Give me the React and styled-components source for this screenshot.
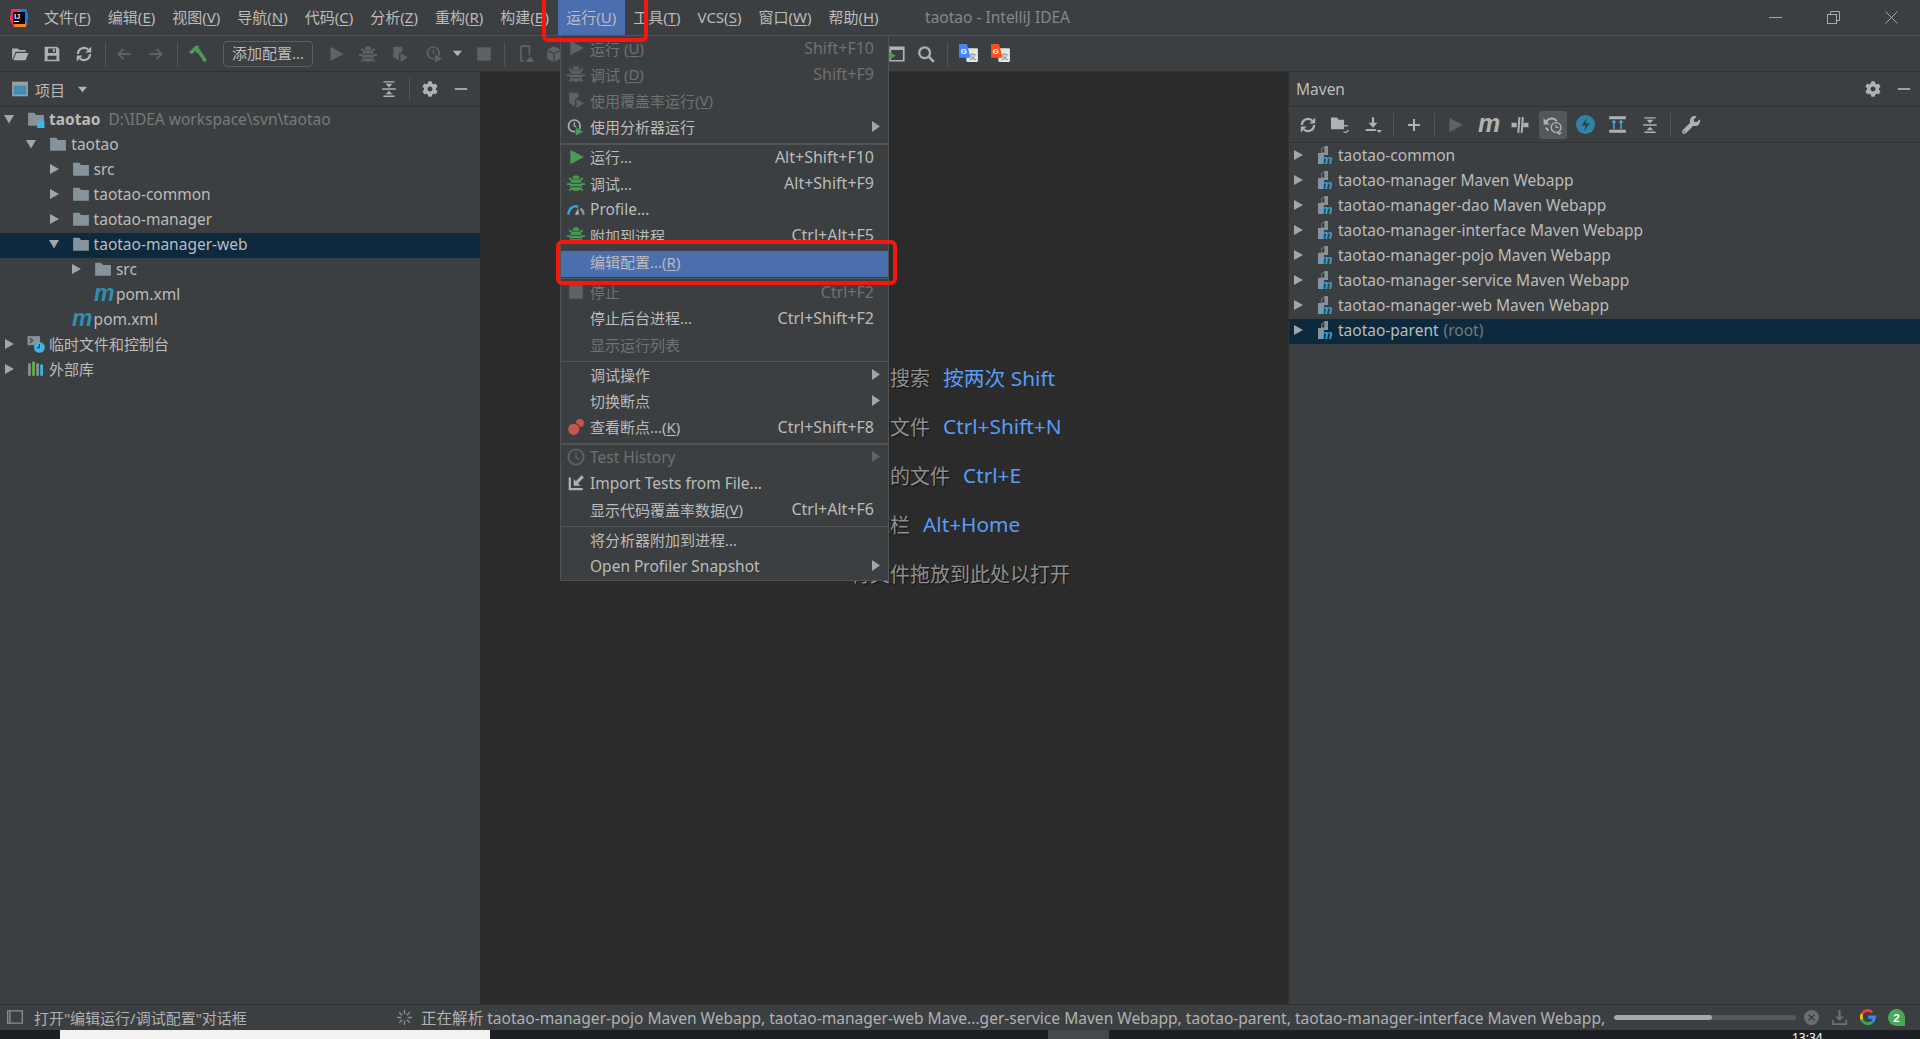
import React from 'react'
import styled, { createGlobalStyle } from 'styled-components'
import { FaCog, FaWrench } from 'react-icons/fa'

const GlobalStyle = createGlobalStyle`
  html, body { margin: 0; padding: 0; background: #3c3f41; }
  * { box-sizing: border-box; }
`

const FONT = '"Noto Sans", "Noto Sans CJK SC", sans-serif'
const GREEN = '#499c54'
const BLUE = '#389fd6'
const TONES = { on: '#afb1b3', off: '#5f6264', green: GREEN, dim: '#6e7072' }

const Page = styled.div`
  position: relative;
  width: 1920px;
  height: 1039px;
  overflow: hidden;
  display: flex;
  flex-direction: column;
  background: #3c3f41;
  color: #bbbbbb;
  font-family: ${FONT};
  font-size: 15px;
  u { text-underline-offset: 2px; }
`

const TitleBar = styled.div`
  height: 36px;
  flex: none;
  display: flex;
  align-items: center;
  padding-left: 9px;
  border-bottom: 1px solid #505254;
`
const MenuList = styled.div`
  display: flex;
  height: 35px;
  margin-left: 6.5px;
`
const MenuItem = styled.div`
  display: flex;
  align-items: center;
  padding: 0 8.5px 2px;
  white-space: nowrap;
  font-size: 15px;
  background: ${p => (p.$active ? '#4b6eaf' : 'transparent')};
`
const WindowTitle = styled.div`
  margin: 0 0 2px 38px;
  color: #858789;
  font-size: 15.5px;
`
const WindowButtons = styled.div`
  margin-left: auto;
  display: flex;
`
const WindowButton = styled.div`
  width: 58px;
  height: 35px;
  display: grid;
  place-items: center;
  color: #a8a8a8;
`

const ToolBar = styled.div`
  height: 36px;
  flex: none;
  display: flex;
  align-items: center;
  gap: ${p => p.$gap || 4}px;
  padding-left: ${p => p.$pad || 6}px;
  border-bottom: 1px solid #323232;
`
const Tool = styled.div`
  width: ${p => p.$w || 28}px;
  height: 28px;
  flex: none;
  display: grid;
  place-items: center;
  border-radius: 3px;
  margin-left: ${p => p.$ml || 0}px;
  background: ${p => (p.$active ? '#55585a' : 'transparent')};
`
const ToolSep = styled.div`
  width: 1px;
  height: 24px;
  flex: none;
  background: #515355;
  margin: 0 ${p => p.$mr ?? 0}px 0 ${p => p.$ml ?? 3}px;
`
const ConfigButton = styled.div`
  width: 90px;
  height: 26px;
  flex: none;
  margin-left: 7px;
  padding-bottom: 2px;
  display: grid;
  place-items: center;
  border: 1px solid #5e6060;
  border-radius: 4px;
  font-size: 15px;
`

const Main = styled.div`
  flex: 1;
  min-height: 0;
  display: flex;
`
const SidePanel = styled.div`
  width: ${p => p.$w}px;
  flex: none;
  display: flex;
  flex-direction: column;
  border-left: ${p => (p.$w === 632 ? '1px solid #323232' : 'none')};
`
const PanelHead = styled.div`
  height: 35px;
  flex: none;
  display: flex;
  align-items: center;
  padding: 0 ${p => p.$padR || 8}px 0 ${p => p.$pad || 11}px;
  border-bottom: 1px solid #323232;
`
const PanelTitle = styled.span`
  margin-left: ${p => p.$ml || 0}px;
  font-size: ${p => p.$size || 15}px;
`
const HeadTools = styled.div`
  margin-left: auto;
  display: flex;
  align-items: center;
  gap: 10px;
`
const TreeList = styled.div`
  padding-top: ${p => p.$top}px;
`
const TreeRow = styled.div`
  height: 25px;
  display: flex;
  align-items: center;
  padding: 0 0 3px ${p => 4 + (p.$depth || 0) * 22.3}px;
  white-space: nowrap;
  font-size: ${p => (p.$cjk ? 15 : 15.5)}px;
  background: ${p => (p.$sel ? '#0d293e' : 'transparent')};
`
const Arrow = styled.svg.attrs({ viewBox: '0 0 10 10' })`
  width: 10px;
  height: 10px;
  flex: none;
  fill: #a3a5a7;
  visibility: ${p => (p.$hidden ? 'hidden' : 'visible')};
`
const RowIcon = styled.span`
  width: 18px;
  height: 18px;
  flex: none;
  margin: 0 4px 0 13px;
  display: grid;
  place-items: center;
`
const Bold = styled.b`
  font-weight: 700;
  color: #bbbbbb;
`
const Muted = styled.span`
  color: #787a7c;
  margin-left: ${p => p.$ml || 0}px;
`

const Editor = styled.div`
  flex: 1;
  background: #2b2b2b;
  padding: 280.5px 0 0 370px;
  font-size: 20px;
  color: #8f8f8f;
  text-shadow: 1px 1px 1px #111;
`
const HintRow = styled.div`
  height: 49px;
  display: flex;
  align-items: center;
  white-space: nowrap;
`
const HintKey = styled.span`
  color: #589df6;
  margin-left: 13px;
  font-size: 20.8px;
  text-shadow: none;
`

const StatusBar = styled.div`
  height: 26px;
  flex: none;
  display: flex;
  align-items: center;
  padding: 0 0 1px 6px;
  border-top: 1px solid #323232;
  color: #afb1b3;
  white-space: nowrap;
`
const StatusHint = styled.span`
  width: 362px;
  margin-left: 10px;
  font-size: 15px;
`
const StatusTask = styled.span`
  width: 1188px;
  margin-left: 8px;
  overflow: hidden;
  font-size: 15.55px;
`
const Progress = styled.div`
  width: 182px;
  height: 5px;
  flex: none;
  margin-left: 5px;
  border-radius: 3px;
  background: #555759;
  overflow: hidden;
`
const ProgressFill = styled.div`
  height: 100%;
  width: 54%;
  background: #a8a8a8;
  border-radius: 3px;
`
const StatusIcons = styled.div`
  display: flex;
  align-items: center;
  margin-left: 8px;
  gap: 12px;
`
const TaskStrip = styled.div`
  height: 9px;
  flex: none;
  display: flex;
  background: #1c2024;
  overflow: hidden;
`
const TaskWhite = styled.div`
  width: 430px;
  margin-left: 60px;
  background: #f2f2f2;
`
const TaskActive = styled.div`
  width: 61px;
  margin-left: 558px;
  background: #45494b;
`
const TaskClock = styled.div`
  margin-left: 683px;
  color: #ffffff;
  font-size: 12px;
  line-height: 16px;
`

const RunMenu = styled.div`
  position: absolute;
  left: 560px;
  top: 36px;
  width: 329px;
  height: 545px;
  background: #3c3f41;
  border: 1px solid #515355;
  border-top: none;
  padding-top: 1px;
`
const Row = styled.div`
  height: 26.2px;
  display: flex;
  align-items: center;
  padding: 0 14px 4px 0;
  white-space: nowrap;
  font-size: 15px;
  color: ${p => (p.$off ? '#6f7173' : '#bbbbbb')};
  background: ${p => (p.$sel ? '#4b6eaf' : 'transparent')};
`
const RowGlyph = styled.span`
  width: 29px;
  height: 20px;
  flex: none;
  display: grid;
  place-items: center;
`
const Latin = styled.span`
  font-size: 15.5px;
`
const Shortcut = styled.span`
  margin-left: auto;
  font-size: 16px;
  color: ${p => (p.$off ? '#6f7173' : '#bbbbbb')};
`
const SubArrow = styled.svg.attrs({ viewBox: '0 0 8 11' })`
  width: 8px;
  height: 11px;
  margin: 0 -6px 0 auto;
  fill: ${p => (p.$off ? '#5f6264' : '#a3a5a7')};
`
const MenuSep = styled.div`
  height: 4px;
  display: flex;
  align-items: center;
  &::before {
    content: '';
    flex: 1;
    height: ${p => (p.$thick ? 2 : 1)}px;
    background: #515355;
  }
`
const RedFrame = styled.div`
  position: absolute;
  left: ${p => p.$x}px;
  top: ${p => p.$y}px;
  width: ${p => p.$w}px;
  height: ${p => p.$h}px;
  border: 4px solid #f6160d;
  border-radius: 6px;
  pointer-events: none;
`

const Svg = styled.svg.attrs(p => ({ viewBox: p.$box || '0 0 16 16' }))`
  width: ${p => p.$s || 18}px;
  height: ${p => p.$s || 18}px;
  display: block;
  color: ${p => TONES[p.$t || 'on']};
  fill: currentColor;
`
const Gear = styled(FaCog)`
  width: 16px;
  height: 16px;
  color: #afb1b3;
`
const Wrench = styled(FaWrench)`
  width: 18px;
  height: 18px;
  color: #afb1b3;
`

const Logo = () => (
  <Svg $s={20} $box="0 0 20 20">
    <path d="M3 1 17 1 19 8 17 19 5 19 1 11z" fill="#fc801d" />
    <path d="M11 1 17 1 19 8 18 15 9 9z" fill="#087cfa" />
    <path d="M1 11 3 1 11 1 8 10 5 19z" fill="#fe2857" />
    <rect x="4" y="4" width="12" height="12" fill="#000" />
    <text x="5.2" y="11" fontSize="7" fontWeight="700" fill="#fff" fontFamily="Liberation Sans">IJ</text>
    <rect x="5" y="13" width="5" height="1" fill="#fff" />
  </Svg>
)
const OpenFolder = p => <Svg {...p}><path d="M1 3h5l1.5 1.5H13V6H4L1.6 12.5H1zM4.6 7H15.6L13 13.5H2z" /></Svg>
const Save = p => <Svg {...p}><path fillRule="evenodd" d="M1.5 1.5h11l2 2v11h-13zM4.5 3v4h7V3zM4 9.5V13h8V9.5zM8.8 3.6h1.6v2.6H8.8z" /></Svg>
const Sync = p => (
  <Svg {...p}>
    <path d="M2.6 8a5.4 5.4 0 0 1 9-4M13.4 8a5.4 5.4 0 0 1-9 4" fill="none" stroke="currentColor" strokeWidth="2" />
    <path d="M14.4 1.4v5.2H9.2zM1.6 14.6V9.4h5.2z" />
  </Svg>
)
const ArrowLeft = p => <Svg {...p}><path d="M14 8H3M7.5 3.5 3 8l4.5 4.5" fill="none" stroke="currentColor" strokeWidth="1.6" /></Svg>
const ArrowRight = p => <Svg {...p}><path d="M2 8h11M8.5 3.5 13 8l-4.5 4.5" fill="none" stroke="currentColor" strokeWidth="1.6" /></Svg>
const Hammer = p => <Svg $t="green" $s={20} {...p}><path d="M.8 6.4 6 1.4h3L8.2 3l2 2-2.6 2.6-2-2-2.6 2.6zM8 7.4l2-2 5.2 7.4-2.2 1.9z" /></Svg>
const Play = p => <Svg {...p}><path d="M3 1.5 15 8 3 14.5z" /></Svg>
const Bug = p => (
  <Svg {...p}>
    <path d="M2 3.5 5 6M14 3.5 11 6M0 9h3M16 9h-3M2 14.500l3-2M14 14.500l-3-2" stroke="currentColor" strokeWidth="1.6" />
    <path d="M5 4.200a3 3 0 0 1 6 0z" />
    <path d="M8 4.800c3.300 0 5.500 1.800 5.500 5S11.300 15 8 15s-5.500-2-5.500-5.200 2.200-5 5.500-5z" />
    <path d="M3 8.200h10M3 11.300h10" stroke="#3c3f41" strokeWidth=".9" />
  </Svg>
)
const Coverage = p => <Svg {...p}><path d="M2 1.5h8v4L7 7.5V14l-5-3.5zM8.5 7l6.5 4-6.5 4z" /></Svg>
const Profiler = ({ $t = 'on', $play, ...p }) => (
  <Svg $t={$t} {...p}>
    <circle cx="6.5" cy="7" r="5.2" fill="none" stroke="currentColor" strokeWidth="1.5" />
    <path d="M6.5 3.8V7l2 1.4" fill="none" stroke="currentColor" strokeWidth="1.2" />
    <path d="M7.6 8.2 15 12.2 7.6 16z" fill={$play || 'currentColor'} stroke="#3c3f41" strokeWidth=".6" />
  </Svg>
)
const Caret = p => <Svg $s={9} $box="0 0 10 10" {...p}><path d="M0 2h10L5 8z" /></Svg>
const Stop = p => <Svg {...p}><rect x="2" y="2" width="12" height="12" /></Svg>
const Device = p => (
  <Svg {...p}>
    <path d="M3.5 1h7.5v8M3.5 1v13h3" fill="none" stroke="currentColor" strokeWidth="1.5" />
    <path d="M8 15l2.5-4 2.5 0 2 4z" />
  </Svg>
)
const Cube = p => <Svg {...p}><path d="M8 1l6 3-6 3-6-3zM2 5.2l5.4 2.7V15L2 12zM14 5.2l-5.4 2.7V15l5.4-3z" /></Svg>
const RunWindow = p => (
  <Svg {...p}>
    <path d="M2 2h12v12H2z" fill="none" stroke="currentColor" strokeWidth="1.5" />
    <path d="M2 2h12v2.4H2z" />
    <path d="M1 6l6 3.5L1 13z" fill={GREEN} />
  </Svg>
)
const Search = p => (
  <Svg {...p}>
    <circle cx="6.8" cy="6.8" r="4.8" fill="none" stroke="currentColor" strokeWidth="2" />
    <path d="M10.2 10.2 15 15" stroke="currentColor" strokeWidth="2.2" />
  </Svg>
)
const Translate = ({ tag }) => (
  <Svg $s={21} $box="0 0 20 20">
    <rect x="8" y="5" width="11" height="13" rx="1" fill="#e6e6e6" />
    <text x="10.5" y="15" fontSize="7" fill="#777" fontFamily="Noto Sans CJK SC">文</text>
    <path d="M1 1h7.5l3.5 13H8.5L7 16.5V14H1z" fill={tag} />
    <text x="2.6" y="10" fontSize="7.5" fontWeight="700" fill="#fff" fontFamily="Liberation Sans">G</text>
  </Svg>
)
const Minus = p => <Svg $s={14} {...p}><rect x="1" y="7" width="14" height="2" /></Svg>
const CollapseAll = p => <Svg {...p}><path d="M3 1h10v1.3H3zM5 3.4h6L8 6.6zM2 7.4h12v1.3H2zM8 9.6l3 3H5zM3 13.7h10V15H3z" /></Svg>
const FOLDER = 'M1 2.5h5.5l1.5 2H15V14H1z'
const Folder = () => <Svg><path d={FOLDER} fill="#87939a" /></Svg>
const ModuleFolder = () => (
  <Svg>
    <path d={FOLDER} fill="#87939a" />
    <rect x="9" y="9.5" width="6.5" height="6.5" fill="#40b6e0" />
  </Svg>
)
const PomIcon = () => (
  <Svg $s={20} $box="0 0 20 20">
    <text x="0" y="16" fontSize="23" fontStyle="italic" fontWeight="700" fill="#2f8fb3" fontFamily="Liberation Sans">m</text>
  </Svg>
)
const Scratch = () => (
  <Svg>
    <rect x="0.5" y="1" width="11" height="8" fill="#87939a" />
    <path d="M2.5 2.8 5 4.8 2.5 6.8" fill="none" stroke="#3c3f41" strokeWidth="1.1" />
    <circle cx="11" cy="11" r="4.8" fill="#40b6e0" />
    <path d="M11 8v3.2H8.8" fill="none" stroke="#3c3f41" strokeWidth="1.1" />
  </Svg>
)
const Library = () => (
  <Svg>
    <rect x="1" y="3" width="2.4" height="11" fill="#87939a" />
    <rect x="4.6" y="1.5" width="2.4" height="12.5" fill="#62b543" />
    <rect x="8.2" y="3" width="2.4" height="11" fill="#87939a" />
    <rect x="11.8" y="4" width="2.4" height="10" fill="#40b6e0" />
  </Svg>
)
const MavenModule = () => (
  <Svg $s={18} $box="0 0 18 18">
    <path d="M2 7h3V3l4-3h3v9H8v9H2z" fill="#87939a" />
    <path d="M5.6 6.5V3.4L8.4 1v5.5z" fill="#3c3f41" />
    <text x="5" y="18" fontSize="13" fontStyle="italic" fontWeight="700" fill={BLUE} fontFamily="Liberation Sans">m</text>
  </Svg>
)
const ReloadFolder = () => (
  <Svg $s={19}>
    <path d="M0 2h5l1.5 2H11v8H0z" />
    <path d="M10 11a2.500 2.500 0 0 1 4-1.600M14.500 12.500a2.500 2.500 0 0 1-4 1.600" fill="none" stroke="currentColor" strokeWidth="1.1" />
  </Svg>
)
const Download = p => <Svg {...p}><path d="M7 1h2v5h3L8 10.5 4 6h3zM1.500 11.500h9v1.800h-9zM11 12.500h5l-2.500 2.500z" /></Svg>
const Plus = p => <Svg $s={16} {...p}><path d="M7 2h2v5h5v2H9v5H7V9H2V7h5z" /></Svg>
const MavenM = () => (
  <Svg $s={24} $box="0 0 24 24">
    <text x="2" y="19" fontSize="25" fontStyle="italic" fontWeight="700" fill="#afb1b3" fontFamily="Liberation Sans">m</text>
  </Svg>
)
const SkipTests = () => (
  <Svg>
    <path d="M.5 6h4.500v4H.5zM11 6h4.500v4H11z" />
    <path d="M6.500 15 7.500 1M9.500 15 10.500 1" stroke="currentColor" strokeWidth="1.8" />
  </Svg>
)
const Offline = () => (
  <Svg $s={20}>
    <path d="M2 7a5 5 0 0 1 9-2M2.500 10a5 5 0 0 0 2 2.600" fill="none" stroke="currentColor" strokeWidth="1.6" />
    <path d="M.5 2.500v5h5z" />
    <circle cx="10.500" cy="10" r="3.900" fill="none" stroke="currentColor" strokeWidth="1.1" />
    <path d="M10.500 7.800V10h2" fill="none" stroke="currentColor" strokeWidth=".9" />
    <path d="M10.500 14h5l-2.500 2z" />
  </Svg>
)
const Bolt = () => (
  <Svg $s={19}>
    <circle cx="8" cy="8" r="8" fill="#2d84a8" />
    <path d="M9 2.500 4.500 9H8l-1 4.500L11.500 7H8z" fill="#3c3f41" />
  </Svg>
)
const Dependencies = () => (
  <Svg $s={19}>
    <path d="M1 1h14v2.500H1zM1 12.500h14V15H1z" />
    <path d="M5 12V6M11 12V6" stroke="#40b6e0" strokeWidth="1.2" />
    <path d="M3 6.500h4l-2-2.500zM9 6.500h4l-2-2.500z" fill="#40b6e0" />
  </Svg>
)
const Gauge = () => (
  <Svg>
    <path d="M1.500 13a6.500 6.500 0 0 1 8.500-7" fill="none" stroke={BLUE} strokeWidth="2.2" />
    <path d="M12 7.500a6.500 6.500 0 0 1 2.500 5.500" fill="none" stroke="#8f9193" strokeWidth="2.2" />
    <path d="M7 13 10 7l.5 6z" fill="#afb1b3" />
  </Svg>
)
const Breakpoints = () => (
  <Svg>
    <circle cx="11.500" cy="4.500" r="3.600" fill="#c75450" />
    <circle cx="6" cy="10" r="5.500" fill="#c75450" stroke="#3c3f41" />
  </Svg>
)
const Clock = () => (
  <Svg $t="off">
    <circle cx="8" cy="8" r="6.800" fill="none" stroke="currentColor" strokeWidth="1.6" />
    <path d="M8 4v4.500l3 1.500" fill="none" stroke="currentColor" strokeWidth="1.3" />
  </Svg>
)
const ImportTests = () => (
  <Svg>
    <path d="M1.500 3h2v9.500H14v2H1.500z" />
    <path d="M6 4.500v6h6l-2.200-2.200L15 3 13 1 7.900 6.500z" />
  </Svg>
)
const StatusFrame = () => (
  <Svg>
    <path d="M1.500 2.500h13v11h-13zM3.500 2.500v11" fill="none" stroke="#8c8e90" strokeWidth="1.2" />
  </Svg>
)
const Spinner = () => (
  <Svg $s={17}>
    <path d="M8 1v4M8 11v4M1 8h4M11 8h4M3 3l2.800 2.800M10.200 10.200 13 13M13 3l-2.800 2.800M5.800 10.200 3 13" stroke="#8a8c8e" strokeWidth="1.3" />
  </Svg>
)
const CancelCircle = () => (
  <Svg $s={15}>
    <circle cx="8" cy="8" r="8" fill="#6b6e70" />
    <path d="M4.800 4.800l6.400 6.400M11.200 4.800l-6.400 6.400" stroke="#3c3f41" strokeWidth="1.5" />
  </Svg>
)
const TrayDownload = () => (
  <Svg $t="dim" $s={17}>
    <path d="M7 1h2v6h3L8 11 4 7h3zM1 10h1.500v3.500h11V10H15v5H1z" />
  </Svg>
)
const GLogo = () => (
  <Svg $s={16}>
    <path d="M8 3a5 5 0 0 1 3.300 1.200l2-2A8 8 0 0 0 .900 4.300L3.200 6.100A5 5 0 0 1 8 3z" fill="#ea4335" />
    <path d="M3.200 6.100.900 4.300a8 8 0 0 0 0 7.400l2.300-1.800a5 5 0 0 1 0-3.800z" fill="#fbbc05" />
    <path d="M8 13a5 5 0 0 1-4.800-3.100L.900 11.700A8 8 0 0 0 13.400 14l-2.200-1.900A5 5 0 0 1 8 13z" fill="#34a853" />
    <path d="M15.800 6.500H8v3.200h4.500a4 4 0 0 1-1.300 2.400l2.200 1.900a8 8 0 0 0 2.400-7.500z" fill="#4285f4" />
  </Svg>
)
const GreenBadge = () => (
  <Svg $s={17}>
    <path d="M8 0a8 8 0 0 1 8 8v8H8A8 8 0 0 1 8 0z" fill="#49a75a" />
    <text x="8" y="12" textAnchor="middle" fontSize="11" fontWeight="700" fill="#fff" fontFamily="Liberation Sans">2</text>
  </Svg>
)
const PanelIcon = () => (
  <Svg>
    <rect x="1" y="1.500" width="14" height="13" fill="#9aa0a4" />
    <rect x="2.500" y="5" width="11" height="8" fill="#3d8fb5" />
  </Svg>
)

const Open = () => <Arrow><path d="M0 1h10L5 9.500z" /></Arrow>
const Closed = () => <Arrow><path d="M1 0l9 5-9 5z" /></Arrow>
const NoArrow = () => <Arrow $hidden />
const Sub = ({ off }) => <SubArrow $off={off}><path d="M0 0l8 5.500L0 11z" /></SubArrow>

const menuNames = [
  ['文件', 'F'], ['编辑', 'E'], ['视图', 'V'], ['导航', 'N'], ['代码', 'C'], ['分析', 'Z'], ['重构', 'R'],
  ['构建', 'B'], ['运行', 'U'], ['工具', 'T'], ['VCS', 'S'], ['窗口', 'W'], ['帮助', 'H'],
]

const mavenRows = [
  'taotao-common',
  'taotao-manager Maven Webapp',
  'taotao-manager-dao Maven Webapp',
  'taotao-manager-interface Maven Webapp',
  'taotao-manager-pojo Maven Webapp',
  'taotao-manager-service Maven Webapp',
  'taotao-manager-web Maven Webapp',
]

const hints = [
  ['随处搜索', '按两次 Shift'],
  ['转到文件', 'Ctrl+Shift+N'],
  ['最近的文件', 'Ctrl+E'],
  ['导航栏', 'Alt+Home'],
]

function App() {
  return (
    <Page>
      <GlobalStyle />
      <TitleBar>
        <Logo />
        <MenuList>
          {menuNames.map(([name, key]) => (
            <MenuItem key={key} $active={key === 'U'}>
              {name}(<u>{key}</u>)
            </MenuItem>
          ))}
        </MenuList>
        <WindowTitle>taotao - IntelliJ IDEA</WindowTitle>
        <WindowButtons>
          <WindowButton>
            <svg width="13" height="2"><rect width="13" height="1" fill="currentColor" /></svg>
          </WindowButton>
          <WindowButton>
            <svg width="13" height="13" fill="none" stroke="currentColor">
              <rect x=".5" y="3.500" width="9" height="9" />
              <path d="M3.500 3.500v-3h9v9h-3" />
            </svg>
          </WindowButton>
          <WindowButton>
            <svg width="13" height="13" stroke="currentColor">
              <path d="M.5.5l12 12M12.500.5l-12 12" />
            </svg>
          </WindowButton>
        </WindowButtons>
      </TitleBar>

      <ToolBar>
        <Tool><OpenFolder /></Tool>
        <Tool><Save /></Tool>
        <Tool><Sync /></Tool>
        <ToolSep />
        <Tool><ArrowLeft $t="off" /></Tool>
        <Tool><ArrowRight $t="off" /></Tool>
        <ToolSep />
        <Tool $ml={2}><Hammer /></Tool>
        <ConfigButton>添加配置...</ConfigButton>
        <Tool $ml={5}><Play $t="off" /></Tool>
        <Tool><Bug $t="off" /></Tool>
        <Tool><Coverage $t="off" /></Tool>
        <Tool $ml={3}><Profiler $t="off" /></Tool>
        <Tool $w={8}><Caret /></Tool>
        <Tool $ml={5}><Stop $t="off" /></Tool>
        <ToolSep $ml={2} />
        <Tool $ml={3}><Device $t="off" /></Tool>
        <Tool $ml={-4}><Cube $t="off" /></Tool>
        <Tool $ml={311}><RunWindow /></Tool>
        <Tool $ml={-3}><Search /></Tool>
        <ToolSep />
        <Tool $ml={2}><Translate tag="#4285f4" /></Tool>
        <Tool><Translate tag="#f4511e" /></Tool>
      </ToolBar>

      <Main>
        <SidePanel $w={480}>
          <PanelHead>
            <PanelIcon />
            <PanelTitle $ml={6}>项目</PanelTitle>
            <Tool $w={16} $ml={9}><Caret /></Tool>
            <HeadTools>
              <Tool $w={20}><CollapseAll /></Tool>
              <ToolSep $ml={0} />
              <Tool $w={20}><Gear /></Tool>
              <Tool $w={22}><Minus /></Tool>
            </HeadTools>
          </PanelHead>
          <TreeList $top={0.5}>
            <TreeRow>
              <Open /><RowIcon><ModuleFolder /></RowIcon>
              <Bold>taotao</Bold><Muted $ml={8}>D:\IDEA workspace\svn\taotao</Muted>
            </TreeRow>
            <TreeRow $depth={1}><Open /><RowIcon><Folder /></RowIcon>taotao</TreeRow>
            <TreeRow $depth={2}><Closed /><RowIcon><Folder /></RowIcon>src</TreeRow>
            <TreeRow $depth={2}><Closed /><RowIcon><Folder /></RowIcon>taotao-common</TreeRow>
            <TreeRow $depth={2}><Closed /><RowIcon><Folder /></RowIcon>taotao-manager</TreeRow>
            <TreeRow $depth={2} $sel><Open /><RowIcon><Folder /></RowIcon>taotao-manager-web</TreeRow>
            <TreeRow $depth={3}><Closed /><RowIcon><Folder /></RowIcon>src</TreeRow>
            <TreeRow $depth={3}><NoArrow /><RowIcon><PomIcon /></RowIcon>pom.xml</TreeRow>
            <TreeRow $depth={2}><NoArrow /><RowIcon><PomIcon /></RowIcon>pom.xml</TreeRow>
            <TreeRow $cjk><Closed /><RowIcon><Scratch /></RowIcon>临时文件和控制台</TreeRow>
            <TreeRow $cjk><Closed /><RowIcon><Library /></RowIcon>外部库</TreeRow>
          </TreeList>
        </SidePanel>

        <Editor>
          {hints.map(([label, key]) => (
            <HintRow key={key}>{label}<HintKey>{key}</HintKey></HintRow>
          ))}
          <HintRow>将文件拖放到此处以打开</HintRow>
        </Editor>

        <SidePanel $w={632}>
          <PanelHead $pad={7} $padR={5}>
            <PanelTitle $size={15.5}>Maven</PanelTitle>
            <HeadTools>
              <Tool $w={20}><Gear /></Tool>
              <Tool $w={22}><Minus /></Tool>
            </HeadTools>
          </PanelHead>
          <ToolBar $gap={4.5} $pad={5}>
            <Tool><Sync /></Tool>
            <Tool><ReloadFolder /></Tool>
            <Tool><Download /></Tool>
            <ToolSep $ml={1.5} $mr={1.5} />
            <Tool><Plus /></Tool>
            <ToolSep $ml={1.5} $mr={1.5} />
            <Tool><Play $t="off" /></Tool>
            <Tool><MavenM /></Tool>
            <Tool><SkipTests /></Tool>
            <Tool $active><Offline /></Tool>
            <Tool><Bolt /></Tool>
            <Tool><Dependencies /></Tool>
            <Tool><CollapseAll /></Tool>
            <ToolSep $ml={1.5} $mr={1.5} />
            <Tool><Wrench /></Tool>
          </ToolBar>
          <TreeList $top={0.5}>
            {mavenRows.map(name => (
              <TreeRow key={name}><Closed /><RowIcon><MavenModule /></RowIcon>{name}</TreeRow>
            ))}
            <TreeRow $sel>
              <Closed /><RowIcon><MavenModule /></RowIcon>taotao-parent<Muted $ml={5}>(root)</Muted>
            </TreeRow>
          </TreeList>
        </SidePanel>
      </Main>

      <StatusBar>
        <StatusFrame />
        <StatusHint>打开"编辑运行/调试配置"对话框</StatusHint>
        <Spinner />
        <StatusTask>正在解析 taotao-manager-pojo Maven Webapp, taotao-manager-web Mave...ger-service Maven Webapp, taotao-parent, taotao-manager-interface Maven Webapp,</StatusTask>
        <Progress><ProgressFill /></Progress>
        <StatusIcons>
          <CancelCircle />
          <TrayDownload />
          <GLogo />
          <GreenBadge />
        </StatusIcons>
      </StatusBar>
      <TaskStrip>
        <TaskWhite />
        <TaskActive />
        <TaskClock>13:34</TaskClock>
      </TaskStrip>

      <RunMenu>
        <Row $off><RowGlyph><Play $t="off" /></RowGlyph>运行 (<u>U</u>)<Shortcut $off>Shift+F10</Shortcut></Row>
        <Row $off><RowGlyph><Bug $t="off" /></RowGlyph>调试 (<u>D</u>)<Shortcut $off>Shift+F9</Shortcut></Row>
        <Row $off><RowGlyph><Coverage $t="off" /></RowGlyph>使用覆盖率运行(<u>V</u>)</Row>
        <Row><RowGlyph><Profiler $play={GREEN} /></RowGlyph>使用分析器运行<Sub /></Row>
        <MenuSep $thick />
        <Row><RowGlyph><Play $t="green" /></RowGlyph>运行...<Shortcut>Alt+Shift+F10</Shortcut></Row>
        <Row><RowGlyph><Bug $t="green" /></RowGlyph>调试...<Shortcut>Alt+Shift+F9</Shortcut></Row>
        <Row><RowGlyph><Gauge /></RowGlyph><Latin>Profile...</Latin></Row>
        <Row><RowGlyph><Bug $t="green" /></RowGlyph>附加到进程...<Shortcut>Ctrl+Alt+F5</Shortcut></Row>
        <Row $sel><RowGlyph />编辑配置...(<u>R</u>)</Row>
        <MenuSep />
        <Row $off><RowGlyph><Stop $t="off" /></RowGlyph>停止<Shortcut $off>Ctrl+F2</Shortcut></Row>
        <Row><RowGlyph />停止后台进程...<Shortcut>Ctrl+Shift+F2</Shortcut></Row>
        <Row $off><RowGlyph />显示运行列表</Row>
        <MenuSep />
        <Row><RowGlyph />调试操作<Sub /></Row>
        <Row><RowGlyph />切换断点<Sub /></Row>
        <Row><RowGlyph><Breakpoints /></RowGlyph>查看断点...(<u>K</u>)<Shortcut>Ctrl+Shift+F8</Shortcut></Row>
        <MenuSep $thick />
        <Row $off><RowGlyph><Clock /></RowGlyph><Latin>Test History</Latin><Sub off /></Row>
        <Row><RowGlyph><ImportTests /></RowGlyph><Latin>Import Tests from File...</Latin></Row>
        <Row><RowGlyph />显示代码覆盖率数据(<u>V</u>)<Shortcut>Ctrl+Alt+F6</Shortcut></Row>
        <MenuSep />
        <Row><RowGlyph />将分析器附加到进程...</Row>
        <Row><RowGlyph /><Latin>Open Profiler Snapshot</Latin><Sub /></Row>
      </RunMenu>
      <RedFrame $x={542} $y={-6} $w={106} $h={48} />
      <RedFrame $x={556} $y={240} $w={341} $h={45} />
    </Page>
  )
}

export default App
